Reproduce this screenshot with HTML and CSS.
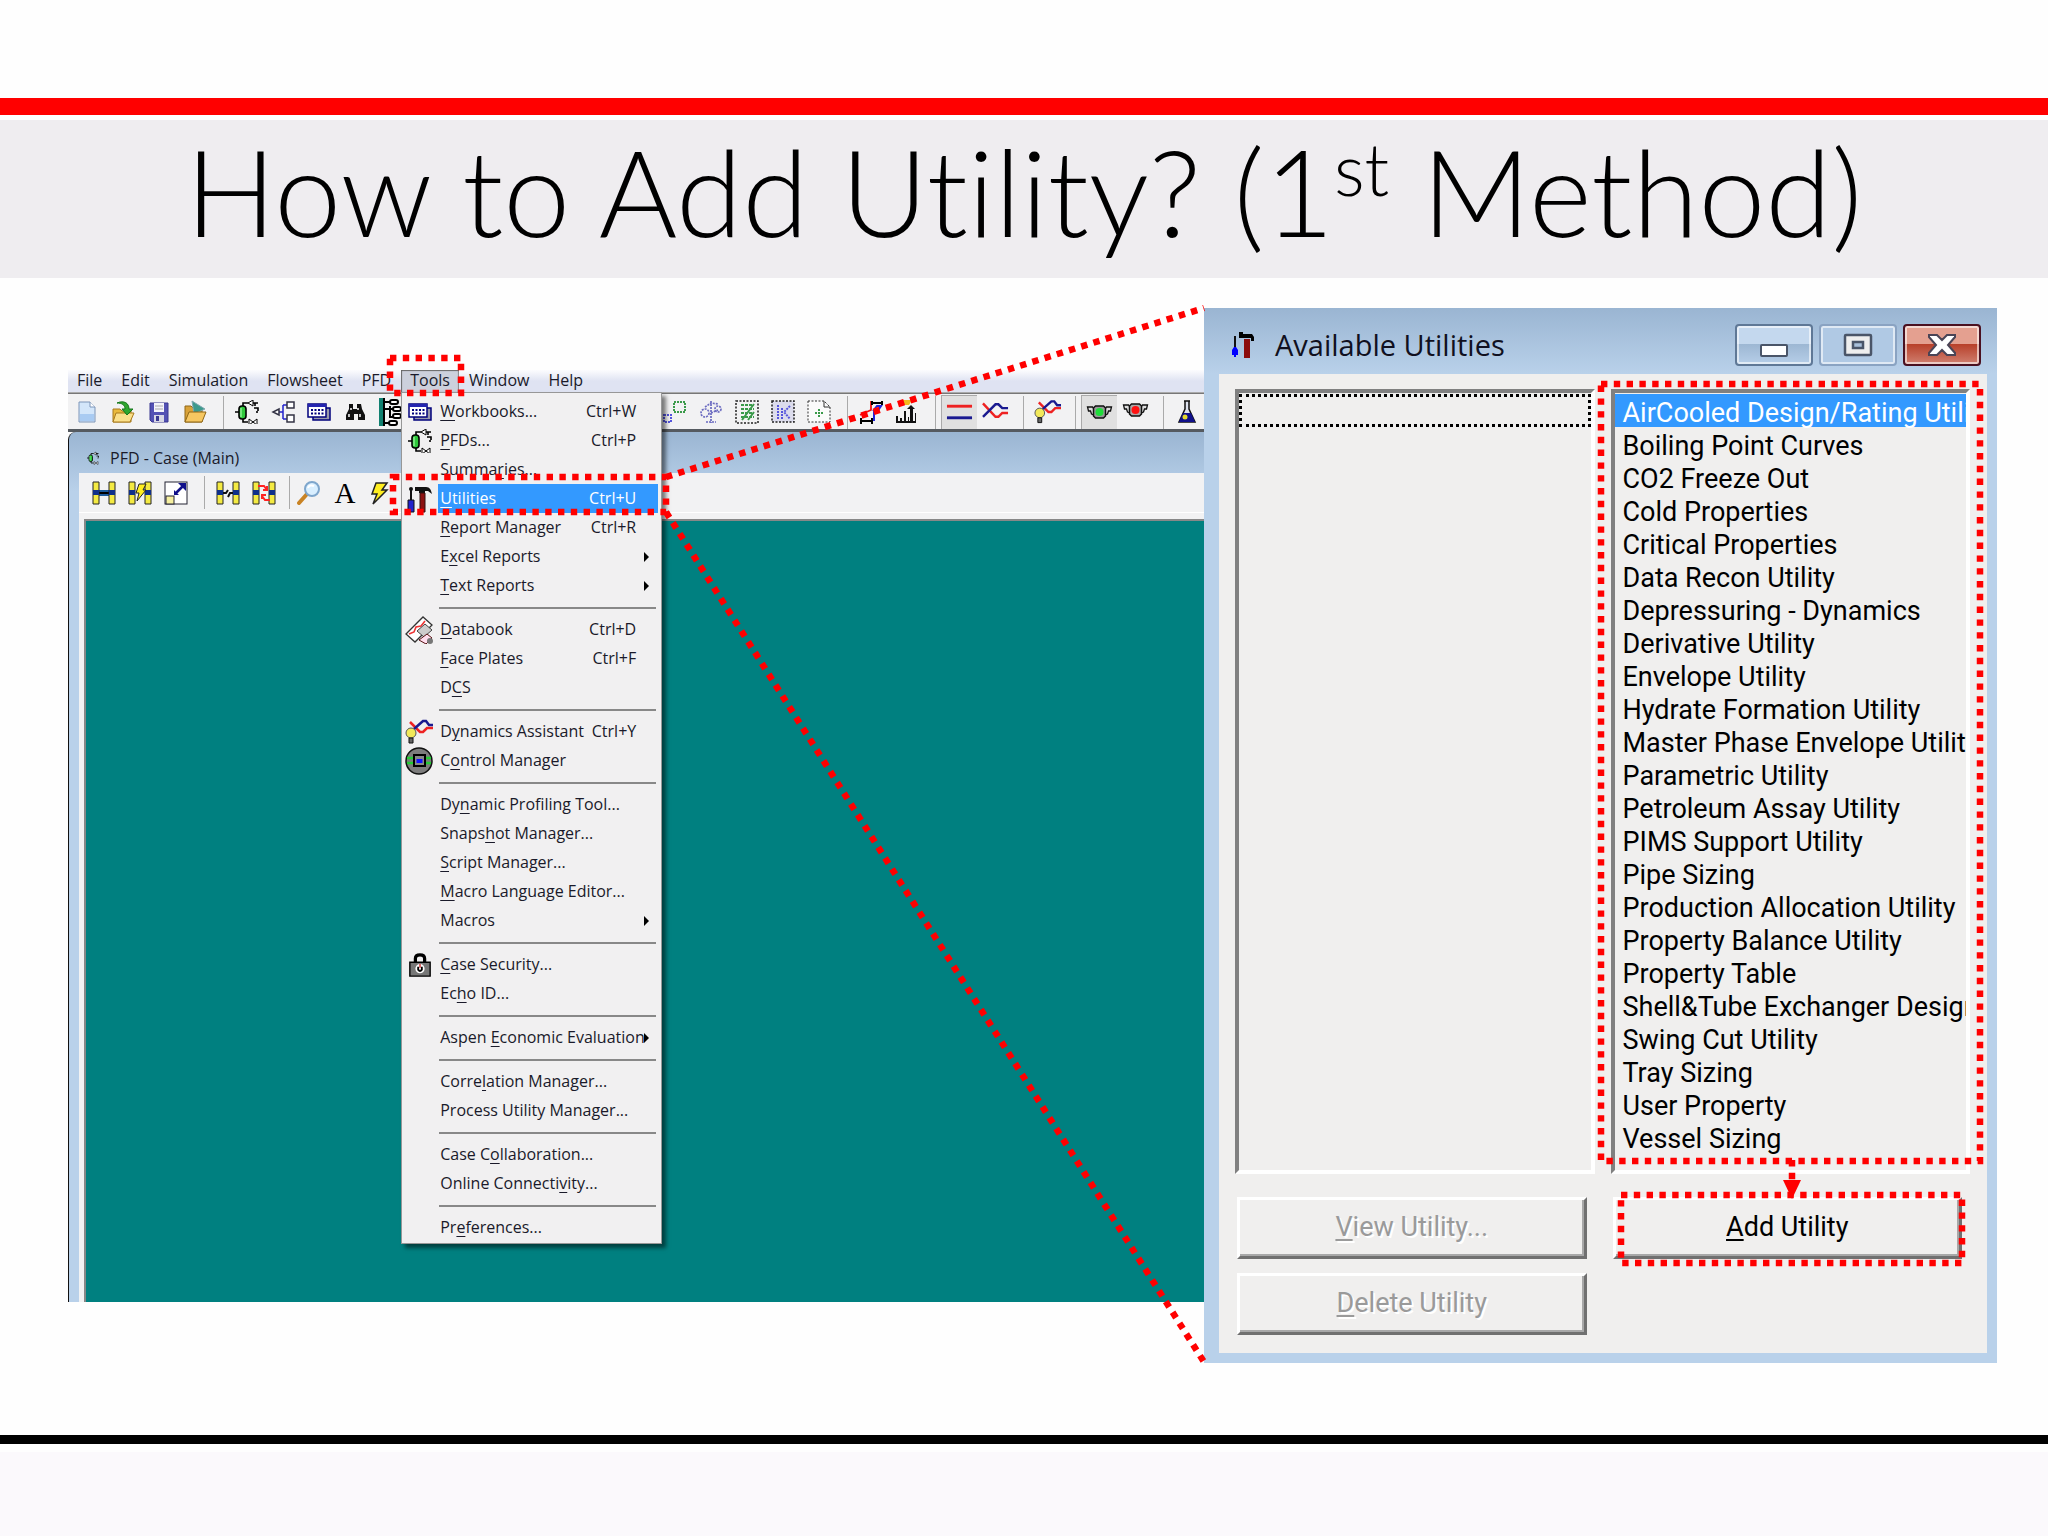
FILE: index.html
```html
<!DOCTYPE html>
<html lang="en">
<head>
  <meta charset="UTF-8">
  <meta name="viewport" content="width=device-width, initial-scale=1.0">
  <title>How to Add Utility? (1st Method)</title>
  <link rel="stylesheet" href="styles.css">
</head>
<body>
  <!-- shared icons -->
  <svg class="sprite" aria-hidden="true">
    <symbol id="i-new" viewBox="0 0 24 24"><path d="M4 2h11l5 5v15H4z" fill="#d3e6fa" stroke="#7d95b8"/><path d="M15 2v5h5" fill="#fff" stroke="#7d95b8"/><path d="M5 14h14v7H5z" fill="#a9cbf2"/></symbol>
    <symbol id="i-open" viewBox="0 0 24 24"><path d="M2 9h7l2 2h9v11H2z" fill="#e9b93c" stroke="#a87a1c"/><path d="M5 13h18l-4 9H2z" fill="#fbe08a" stroke="#a87a1c"/><path d="M6 3c7-3 12 0 12 6h4l-6 6-5-6h3c0-4-3-6-8-6z" fill="#2fa62f" stroke="#14761a"/></symbol>
    <symbol id="i-save" viewBox="0 0 24 24"><path d="M3 3h18v19H5l-2-2z" fill="#5351b4" stroke="#3a3891"/><path d="M7 3h10v9H7z" fill="#f4f4fb"/><path d="M8 6h8M8 9h8" stroke="#aaa"/><path d="M7 15h10v7H7z" fill="#d7d7e4"/><path d="M9 16h3v5H9z" fill="#3a3891"/></symbol>
    <symbol id="i-case" viewBox="0 0 24 24"><path d="M2 6h6l2 2h9v14H2z" fill="#d9a238" stroke="#8f6716"/><path d="M9 1l13 8-11 5z" fill="#3d9a8c" stroke="#7fa8b0"/><path d="M6 12h17l-4 10H2z" fill="#f6c761" stroke="#8f6716"/></symbol>
    <symbol id="i-pfd" viewBox="0 0 24 24"><rect x="4" y="6" width="7" height="13" rx="3" fill="#2fc83c" stroke="#000" stroke-width="1.6"/><path d="M6 8v9" stroke="#b8ffb8"/><path d="M0 12h4M8 6V3h5M8 19v3h5M18 3h5M20 3v3M19 8h4v3M22 11v2" stroke="#000" stroke-width="1.6" fill="none"/><path d="M18 0v6l-5-3zM14 19l4 3-4 3zM22 19l-4 3 4 3z" fill="#fff" stroke="#000"/></symbol>
    <symbol id="i-flow" viewBox="0 0 24 24"><path d="M8 12h4M12 5v14M12 5h4M12 19h4" stroke="#22c" stroke-width="1.5" fill="none"/><path d="M8 9v6l-6-3z" fill="#fff" stroke="#334" stroke-width="1.5"/><rect x="16" y="2" width="7" height="6" fill="#fff" stroke="#334" stroke-width="1.5"/><rect x="16" y="15" width="7" height="7" fill="#fff" stroke="#334" stroke-width="1.5"/></symbol>
    <symbol id="i-book" viewBox="0 0 24 24"><path d="M6 8h17v12H6z" fill="#99a" stroke="#00007c" stroke-width="1.5"/><path d="M1 4h18v13H1z" fill="#fff" stroke="#00007c" stroke-width="1.5"/><path d="M1 4h18v3H1z" fill="#2525b0"/><path d="M4 10h13M4 13.500h13" stroke="#00007c" stroke-width="2" stroke-dasharray="2 1.500"/></symbol>
    <symbol id="i-find" viewBox="0 0 24 24"><path d="M6 4h4v5h4V4h4l1 5 3 6v5h-7v-6h-4v6H3v-5l3-6z" fill="#111"/><path d="M6 14v3M17 14v3M8 8v2M15 8v2" stroke="#fff" stroke-width="1.5"/></symbol>
    <symbol id="i-tree" viewBox="0 0 24 28"><path d="M2 0v28" stroke="#108070" stroke-width="4"/><path d="M5 0v28M5 4h7M5 11h6M11 8v12M11 11h4M11 19h4M5 25h6" stroke="#000" stroke-width="2" fill="none"/><g fill="#fff" stroke="#000" stroke-width="2"><rect x="11" y="2" width="8" height="4" rx="2"/><rect x="14" y="9" width="8" height="4" rx="2"/><rect x="14" y="16" width="8" height="4" rx="2"/><rect x="10" y="23" width="8" height="4" rx="2"/></g></symbol>
    <symbol id="i-blocks" viewBox="0 0 24 24"><g fill="none" stroke-width="2" stroke-dasharray="2 1"><rect x="11" y="2" width="11" height="10" stroke="#3a9a4a"/><rect x="1" y="15" width="7" height="7" stroke="#55d"/></g></symbol>
    <symbol id="i-scale" viewBox="0 0 24 24"><g fill="none" stroke="#6a6ac0" stroke-width="1.700" stroke-dasharray="2 1"><path d="M12 1v22M7 22h10M6 7l6-4 7 1M12 13l7-3"/><circle cx="6" cy="13" r="4"/><circle cx="19" cy="9" r="3"/></g></symbol>
    <symbol id="i-grid" viewBox="0 0 24 24"><rect x="1" y="1" width="22" height="22" fill="none" stroke="#222" stroke-width="1.500" stroke-dasharray="2 1.500"/><path d="M6 5h13M6 9h13M6 13h13M6 17h13" stroke="#3a9a4a" stroke-width="2" stroke-dasharray="3 1"/><path d="M7 20L19 4M13 20l6-8" stroke="#3a9a4a" stroke-width="2"/></symbol>
    <symbol id="i-sheet" viewBox="0 0 24 24"><rect x="1" y="1" width="22" height="21" fill="#dcdcec" stroke="#222" stroke-width="1.500" stroke-dasharray="2 1.500"/><path d="M7 5v14M11 8v11M19 6l-6 6 6 7" stroke="#55d" stroke-width="2" stroke-dasharray="2 1" fill="none"/></symbol>
    <symbol id="i-note" viewBox="0 0 24 24"><path d="M1 1h16l6 6v15H1z" fill="#fbfbfb" stroke="#333" stroke-dasharray="2 1.500"/><path d="M17 1v6h6" stroke="#333" fill="none"/><path d="M8 13h8M12 9v8" stroke="#3a9a4a" stroke-width="2" stroke-dasharray="2 1"/></symbol>
    <symbol id="i-strip" viewBox="0 0 24 24"><path d="M1 15l11-5V1" stroke="#e11" stroke-width="1.800" fill="none"/><path d="M15 21v-9h3l4-6h-4l-4 5" stroke="#22d" stroke-width="2" fill="none"/><path d="M13 3h10M2 21h11M2 18v6M13 18v6M13 1v4M23 1v4" stroke="#000" stroke-width="2"/></symbol>
    <symbol id="i-bars" viewBox="0 0 24 24"><path d="M1 23v-7h2v5h2v-3h2v3h2V11h2v10h2v-4h1v4h1V7h3v14h2v-8h1v10z" fill="#111"/><path d="M12 9l4-4 4 4z" fill="#111"/><path d="M6 0h11l-3 5h-4z" fill="#f4b81c"/></symbol>
    <symbol id="i-lines" viewBox="0 0 28 24"><path d="M1 6h26" stroke="#e22" stroke-width="3"/><path d="M1 18h26" stroke="#1a1a90" stroke-width="3"/></symbol>
    <symbol id="i-cross" viewBox="0 0 28 24"><path d="M1 3l13 14h3l4-4h6" stroke="#e22" stroke-width="2.500" fill="none"/><path d="M1 17L14 4h3l4 4h6" stroke="#1a1a90" stroke-width="2.500" fill="none"/></symbol>
    <symbol id="i-dyn" viewBox="0 0 28 24"><path d="M5 2l10 10h3l4-4h6" stroke="#e22" stroke-width="2.500" fill="none"/><path d="M9 9l9-8h3l3 4h4" stroke="#1a1a90" stroke-width="2.500" fill="none"/><circle cx="6" cy="13" r="5" fill="#f2e95a" stroke="#555"/><path d="M4 18h4v5H4z" fill="#666" stroke="#111"/></symbol>
    <symbol id="i-go" viewBox="0 0 26 24"><path d="M1 7h5l2 3v5l-3-1-1-3H2zM25 7h-5l-2 3v5l3-1 1-3h2z" fill="#ddd" stroke="#111" stroke-width="1.300"/><path d="M9 6h8l2 2v8l-2 2H9l-2-2V8z" fill="#999" stroke="#111" stroke-width="1.500"/><circle cx="13" cy="12" r="4" fill="#1fdd3a"/></symbol>
    <symbol id="i-stop" viewBox="0 0 26 24"><path d="M1 5h5l2 3v5l-3-1-1-3H2zM25 5h-5l-2 3v5l3-1 1-3h2z" fill="#ddd" stroke="#111" stroke-width="1.300"/><path d="M9 4h8l2 2v8l-2 2H9l-2-2V6z" fill="#aaa" stroke="#111" stroke-width="1.500"/><circle cx="13" cy="10" r="4" fill="#f11"/></symbol>
    <symbol id="i-flask" viewBox="0 0 24 24"><path d="M9 1h6M10 1v8L4 22h16L14 9V1" fill="#dfe3ef" stroke="#111" stroke-width="1.500"/><path d="M8 13h8l4 9H4z" fill="#10108a"/><circle cx="10" cy="17" r="2.500" fill="#e6d92c"/></symbol>
    <symbol id="i-attach" viewBox="0 0 24 24"><path d="M2 9h20v6H2z" fill="#1c5a9c"/><path d="M6 12h12" stroke="#000" stroke-width="2"/><path d="M1 1h6v22H1zM17 1h6v22h-6z" fill="#f4ea42" stroke="#222"/><path d="M1 9h6v5H1zM17 9h6v5h-6z" fill="#10308a"/></symbol>
    <symbol id="i-auto" viewBox="0 0 24 24"><path d="M1 1h6v22H1zM17 1h6v22h-6z" fill="#f4ea42" stroke="#222"/><path d="M1 9h6v5H1zM17 9h6v5h-6z" fill="#10308a"/><path d="M11 3h7l-3 6h3l-9 11 2-8H8z" fill="#ffee20" stroke="#222"/></symbol>
    <symbol id="i-size" viewBox="0 0 24 24"><rect x="1" y="1" width="22" height="22" fill="#fff" stroke="#223"/><rect x="2" y="15" width="8" height="8" fill="#f5efa0" stroke="#223"/><path d="M11 13l8-8" stroke="#10108a" stroke-width="2.500"/><path d="M14 2h8v8zM10 9v5h5z" fill="#10108a"/></symbol>
    <symbol id="i-break" viewBox="0 0 24 24"><path d="M1 1h6v22H1zM17 1h6v22h-6z" fill="#f4ea42" stroke="#222"/><path d="M1 9h6v5H1zM17 9h6v5h-6z" fill="#10308a"/><path d="M7 12h3l2-3M17 12h-3l-2 4" stroke="#111" stroke-width="2" fill="none"/></symbol>
    <symbol id="i-swap" viewBox="0 0 24 24"><path d="M1 1h6v22H1zM17 1h6v22h-6z" fill="#f4ea42" stroke="#222"/><path d="M1 9h6v5H1zM17 9h6v5h-6z" fill="#10308a"/><path d="M6 5h6l3 4M11 9h4V5M18 19h-5l-3-4M14 14h-4v4" stroke="#f22" stroke-width="2" fill="none"/></symbol>
    <symbol id="i-zoom" viewBox="0 0 24 24"><path d="M2 22l8-9" stroke="#c98324" stroke-width="4" stroke-linecap="round"/><circle cx="15" cy="8" r="7" fill="#d9efff" stroke="#7ea6cc" stroke-width="2"/><path d="M11 7c1-3 4-3 6-2" stroke="#fff" stroke-width="2" fill="none"/></symbol>
    <symbol id="i-bolt" viewBox="0 0 24 24"><path d="M7 2h11l-5 7h5L4 23l4-10H3z" fill="#ffee20" stroke="#222" stroke-width="1.500"/></symbol>
    <symbol id="i-tools" viewBox="0 0 26 28"><path d="M5 3v12" stroke="#111" stroke-width="2"/><circle cx="5" cy="4" r="2" fill="#111"/><path d="M2 15h6v12H2z" fill="#22c" stroke="#111"/><path d="M9 2h11c4 0 5 3 6 7l-4-3H19v2h-6V6H9z" fill="#111"/><path d="M14 8h5v19h-5z" fill="#8c1212" stroke="#311"/></symbol>
    <symbol id="i-util" viewBox="0 0 24 28"><path d="M4 5v12" stroke="#111" stroke-width="2"/><path d="M3 16h2l2 3v5H5v2H3v-2H1v-5z" fill="#00f"/><path d="M8 1h4v2h9l2 3v4h-3V7H8z" fill="#000"/><path d="M13 8h6v19h-6z" fill="#8c0c0c"/></symbol>
    <symbol id="i-databook" viewBox="0 0 28 28"><path d="M1 18L18 1l9 8-17 17z" fill="#fff" stroke="#333" stroke-width="1.300"/><path d="M4 18l5-2 2-5 5-1 4-5" stroke="#e33" stroke-width="1.600" fill="none"/><path d="M12 15l8-7 7 6-8 7z" fill="#ccc" stroke="#444"/><path d="M14 24l8-6 5 4-6 6z" fill="#fde" stroke="#511"/><circle cx="25" cy="25" r="3" fill="#777"/></symbol>
    <symbol id="i-control" viewBox="0 0 28 28"><circle cx="14" cy="14" r="13" fill="#7d7d7d" stroke="#111" stroke-width="1.500"/><path d="M2 11h24M2 16h24" stroke="#22cc33" stroke-width="2.500"/><rect x="9" y="8" width="11" height="11" fill="#888" stroke="#000" stroke-width="2"/><path d="M11.500 12h6v4h-6z" fill="#11f"/></symbol>
    <symbol id="i-lock" viewBox="0 0 26 26"><path d="M8 11V6q0-4 5-4t5 4v5" fill="none" stroke="#000" stroke-width="3.500"/><path d="M2 10h22v15H2z" fill="#777" stroke="#000" stroke-width="1.500"/><circle cx="13" cy="17" r="5" fill="#fff"/><path d="M11 15v3q2 3 4 0v-3" fill="none" stroke="#000" stroke-width="2"/><path d="M13 12v4" stroke="#c22" stroke-width="1.500"/></symbol>
  </svg>

  <div class="slide">
    <header class="slide-header">
      <h1>How to Add Utility? (1<sup>st</sup> Method)</h1>
    </header>

    <main class="stage">
      <section class="app" aria-label="Simulation window">
        <nav class="menubar">
          <button>File</button>
          <button>Edit</button>
          <button>Simulation</button>
          <button>Flowsheet</button>
          <button>PFD</button>
          <div class="menu-holder">
            <button class="open">Tools</button>
            <ul class="menu">
              <li><button><svg><use href="#i-book"/></svg><span class="label"><u>W</u>orkbooks...</span><kbd>Ctrl+W</kbd></button></li>
              <li><button><svg><use href="#i-pfd"/></svg><span class="label"><u>P</u>FDs...</span><kbd>Ctrl+P</kbd></button></li>
              <li><button><span class="label">Summa<u>r</u>ies...</span></button></li>
              <li><button class="active"><svg class="big"><use href="#i-tools"/></svg><span class="label"><u>U</u>tilities</span><kbd>Ctrl+U</kbd></button></li>
              <li><button><span class="label"><u>R</u>eport Manager</span><kbd>Ctrl+R</kbd></button></li>
              <li><button class="more"><span class="label">E<u>x</u>cel Reports</span></button></li>
              <li><button class="more"><span class="label"><u>T</u>ext Reports</span></button></li>
              <li class="line"></li>
              <li><button><svg class="big"><use href="#i-databook"/></svg><span class="label"><u>D</u>atabook</span><kbd>Ctrl+D</kbd></button></li>
              <li><button><span class="label"><u>F</u>ace Plates</span><kbd>Ctrl+F</kbd></button></li>
              <li><button><span class="label">D<u>C</u>S</span></button></li>
              <li class="line"></li>
              <li><button><svg class="big"><use href="#i-dyn"/></svg><span class="label">D<u>y</u>namics Assistant</span><kbd>Ctrl+Y</kbd></button></li>
              <li><button><svg class="big"><use href="#i-control"/></svg><span class="label">C<u>o</u>ntrol Manager</span></button></li>
              <li class="line"></li>
              <li><button><span class="label">Dy<u>n</u>amic Profiling Tool...</span></button></li>
              <li><button><span class="label">Snaps<u>h</u>ot Manager...</span></button></li>
              <li><button><span class="label"><u>S</u>cript Manager...</span></button></li>
              <li><button><span class="label"><u>M</u>acro Language Editor...</span></button></li>
              <li><button class="more"><span class="label">Macros</span></button></li>
              <li class="line"></li>
              <li><button><svg><use href="#i-lock"/></svg><span class="label"><u>C</u>ase Security...</span></button></li>
              <li><button><span class="label">Ec<u>h</u>o ID...</span></button></li>
              <li class="line"></li>
              <li><button class="more"><span class="label">Aspen <u>E</u>conomic Evaluation</span></button></li>
              <li class="line"></li>
              <li><button><span class="label">Corre<u>l</u>ation Manager...</span></button></li>
              <li><button><span class="label">Process Utility Manager...</span></button></li>
              <li class="line"></li>
              <li><button><span class="label">Case C<u>o</u>llaboration...</span></button></li>
              <li><button><span class="label">Online Connecti<u>v</u>ity...</span></button></li>
              <li class="line"></li>
              <li><button><span class="label">Pr<u>e</u>ferences...</span></button></li>
            </ul>
          </div>
          <button>Window</button>
          <button>Help</button>
        </nav>

        <div class="toolbar">
          <button aria-label="New"><svg><use href="#i-new"/></svg></button>
          <button aria-label="Open"><svg><use href="#i-open"/></svg></button>
          <button aria-label="Save"><svg><use href="#i-save"/></svg></button>
          <button aria-label="Open case"><svg><use href="#i-case"/></svg></button>
          <i class="sep"></i>
          <button aria-label="PFD"><svg><use href="#i-pfd"/></svg></button>
          <button aria-label="Flowsheet"><svg><use href="#i-flow"/></svg></button>
          <button aria-label="Workbook"><svg><use href="#i-book"/></svg></button>
          <button aria-label="Find"><svg><use href="#i-find"/></svg></button>
          <button aria-label="Navigator"><svg class="tall"><use href="#i-tree"/></svg></button>
          <i class="sep"></i>
          <button aria-label="Column"></button>
          <button aria-label="Components"></button>
          <button aria-label="Reactions"></button>
          <i class="sep"></i>
          <button aria-label="Basis"></button>
          <button aria-label="Oil"></button>
          <button aria-label="Palette"></button>
          <button aria-label="Blocks"><svg><use href="#i-blocks"/></svg></button>
          <button aria-label="Balance"><svg><use href="#i-scale"/></svg></button>
          <button aria-label="Grid"><svg><use href="#i-grid"/></svg></button>
          <button aria-label="Sheet"><svg><use href="#i-sheet"/></svg></button>
          <button aria-label="Note"><svg><use href="#i-note"/></svg></button>
          <i class="sep"></i>
          <button aria-label="Strip chart"><svg><use href="#i-strip"/></svg></button>
          <button aria-label="Histogram"><svg><use href="#i-bars"/></svg></button>
          <i class="sep"></i>
          <button class="pressed" aria-label="Steady state"><svg class="wide"><use href="#i-lines"/></svg></button>
          <button aria-label="Dynamics"><svg class="wide"><use href="#i-cross"/></svg></button>
          <i class="sep"></i>
          <button aria-label="Dynamics assistant"><svg class="wide"><use href="#i-dyn"/></svg></button>
          <i class="sep"></i>
          <button class="pressed" aria-label="Solver active"><svg class="wide"><use href="#i-go"/></svg></button>
          <button aria-label="Solver holding"><svg class="wide"><use href="#i-stop"/></svg></button>
          <i class="sep"></i>
          <button aria-label="Environment"><svg><use href="#i-flask"/></svg></button>
        </div>

        <div class="child">
          <div class="child-title"><svg><use href="#i-pfd"/></svg>PFD - Case (Main)</div>
          <div class="child-body">
            <div class="toolbar small">
              <button aria-label="Attach"><svg><use href="#i-attach"/></svg></button>
              <button aria-label="Auto attach"><svg><use href="#i-auto"/></svg></button>
              <button aria-label="Size"><svg><use href="#i-size"/></svg></button>
              <i class="sep"></i>
              <button aria-label="Break"><svg><use href="#i-break"/></svg></button>
              <button aria-label="Swap"><svg><use href="#i-swap"/></svg></button>
              <i class="sep narrow"></i>
              <button aria-label="Zoom"><svg><use href="#i-zoom"/></svg></button>
              <button class="letter">A</button>
              <button aria-label="Quick route"><svg><use href="#i-bolt"/></svg></button>
            </div>
            <div class="canvas"></div>
          </div>
        </div>
      </section>

      <section class="dialog" aria-label="Available Utilities">
        <div class="dialog-title">
          <svg class="dialog-icon"><use href="#i-util"/></svg>
          <h2>Available Utilities</h2>
          <div class="win-buttons">
            <button aria-label="Minimize"><svg viewBox="0 0 30 24"><rect x="2" y="12" width="26" height="11" rx="1" fill="#fff" stroke="#4a5568" stroke-width="2"/></svg></button>
            <button class="dim" aria-label="Maximize"><svg viewBox="0 0 30 24"><rect x="2" y="2" width="26" height="20" rx="1" fill="#eee" stroke="#4a5568" stroke-width="2.500"/><rect x="10" y="9" width="10" height="6" fill="#a9c0da" stroke="#4a5568" stroke-width="2.500"/></svg></button>
            <button class="close" aria-label="Close"><svg viewBox="0 0 30 24"><path d="M2 2h8l5 5 5-5h8v2l-7 8 7 8v2h-8l-5-5-5 5H2v-2l7-8-7-8z" fill="#fff" stroke="#4a4456" stroke-width="2"/></svg></button>
          </div>
        </div>
        <form class="dialog-body">
          <div class="column">
            <select class="list current" size="23" aria-label="Current utilities">
              <option></option>
            </select>
            <button type="button" disabled><u>V</u>iew Utility...</button>
            <button type="button" disabled><u>D</u>elete Utility</button>
          </div>
          <div class="column">
            <select class="list" size="23" aria-label="Available utilities">
              <option selected>AirCooled Design/Rating Utility</option>
              <option>Boiling Point Curves</option>
              <option>CO2 Freeze Out</option>
              <option>Cold Properties</option>
              <option>Critical Properties</option>
              <option>Data Recon Utility</option>
              <option>Depressuring - Dynamics</option>
              <option>Derivative Utility</option>
              <option>Envelope Utility</option>
              <option>Hydrate Formation Utility</option>
              <option>Master Phase Envelope Utility</option>
              <option>Parametric Utility</option>
              <option>Petroleum Assay Utility</option>
              <option>PIMS Support Utility</option>
              <option>Pipe Sizing</option>
              <option>Production Allocation Utility</option>
              <option>Property Balance Utility</option>
              <option>Property Table</option>
              <option>Shell&amp;Tube Exchanger Design</option>
              <option>Swing Cut Utility</option>
              <option>Tray Sizing</option>
              <option>User Property</option>
              <option>Vessel Sizing</option>
            </select>
            <button type="button"><u>A</u>dd Utility</button>
          </div>
        </form>
      </section>
    </main>

    <footer class="slide-footer"></footer>

    <!-- red call-outs drawn over the two windows -->
    <svg class="callouts" viewBox="0 0 2048 1536" preserveAspectRatio="none" aria-hidden="true">
      <g fill="none" stroke="#f00" stroke-width="6.500" stroke-dasharray="6.400 6.400">
        <rect x="390" y="358" width="71" height="35"/>
        <rect x="393" y="477" width="273" height="35"/>
        <rect x="1601" y="384" width="379" height="777"/>
        <rect x="1621" y="1195" width="341" height="68"/>
        <path d="M666 477L1204 308M666 512l538 850M1792 1160v22"/>
      </g>
      <path d="M1783 1180h18l-9 19z" fill="#f00"/>
    </svg>
  </div>
</body>
</html>
```
FILE: styles.css
```css
* {
  box-sizing: border-box;
}
body {
  margin: 0;
  background: #fefefe;
  font-family: "Open Sans", "Noto Sans", sans-serif;
  color: #1a1a2a;
}
button {
  font: inherit;
  color: inherit;
  background: none;
  border: 0;
  padding: 0;
}
.sprite {
  position: absolute;
  width: 0;
  height: 0;
}
.slide {
  position: relative;
  display: flex;
  flex-direction: column;
  min-height: 100vh;
  padding-top: 98px;
}

/* title band */
.slide-header {
  border-top: 17px solid #f00;
}
.slide-header h1 {
  margin: 5px 0 0;
  height: 158px;
  background: #efedf0;
  color: #000;
  font-family: Lato, sans-serif;
  font-size: 120px;
  font-weight: 300;
  font-variant-ligatures: none;
  line-height: 142px;
  text-align: center;
  white-space: nowrap;
}
.slide-header sup {
  font-size: 72px;
  line-height: 0;
}
.stage {
  display: grid;
  grid-template-columns: 1136fr 793fr;
  padding: 30px 51px 0 68px;
}
.slide-footer {
  margin-top: auto;
  height: 101px;
  border-top: 9px solid #000;
  background: linear-gradient(#fefefe 8px, #fbf9fc 8px);
}
.callouts {
  position: absolute;
  inset: 0;
  width: 100%;
  height: 100%;
  pointer-events: none;
  z-index: 5;
}

/* main window */
.app {
  display: flex;
  flex-direction: column;
  min-width: 0;
  margin: 62px 0 61px;
  font-size: 16px;
}
.menubar {
  display: flex;
  gap: 1px;
  height: 23px;
  background: linear-gradient(#fcfcfe, #dfe3f2 50%, #dfe3f2);
  border-bottom: 1px solid #aaa;
}
.menubar > button,
.menu-holder > button {
  display: block;
  height: 22px;
  padding: 0 9px 2px;
  line-height: 20px;
}
.menu-holder {
  position: relative;
}
.menu-holder > .open {
  background: #ccd0dc;
  box-shadow: inset 1px 1px 1px #666, inset -1px 0 1px #888;
}
.menu {
  position: absolute;
  top: 22px;
  left: 0;
  z-index: 2;
  width: 261px;
  margin: 0;
  padding: 4px 3px 1px 1px;
  list-style: none;
  background: #f1f0f1;
  border: 1px solid #979797;
  box-shadow: 4px 4px 4px rgba(0, 0, 0, 0.5);
}
.menu button {
  position: relative;
  display: flex;
  align-items: center;
  width: 100%;
  height: 29px;
  padding-left: 35px;
  text-align: left;
  white-space: nowrap;
}
.menu svg {
  position: absolute;
  left: 5px;
  width: 24px;
  height: 24px;
}
.menu svg.big {
  left: 2px;
  width: 28px;
  height: 28px;
}
.menu .label {
  flex: 1;
  line-height: 29px;
  padding-left: 2px;
}
.menu kbd {
  font: inherit;
  line-height: 29px;
  padding-right: 22px;
}
.menu .active {
  color: #fff;
  background: linear-gradient(#39f, #39f) 35px 0 no-repeat;
}
.menu .more::after {
  content: "";
  position: absolute;
  right: 9px;
  border: 5px solid transparent;
  border-left-color: #000;
  border-right: 0;
}
.menu .line {
  height: 15px;
  margin: 0 2px 0 36px;
  background: linear-gradient(#888, #888) 0 7px / 100% 2px no-repeat;
}
u {
  text-underline-offset: 3px;
}

.toolbar {
  display: flex;
  align-items: center;
  height: 39px;
  padding: 1px 0 0 1px;
  overflow: hidden;
  background: #f2f2f3;
  border-top: 1px solid #777;
  border-bottom: 3px solid #555a60;
}
.toolbar button {
  display: grid;
  place-items: center;
  flex: none;
  width: 36px;
  height: 34px;
}
.toolbar svg {
  width: 24px;
  height: 24px;
}
.toolbar svg.tall {
  height: 28px;
}
.toolbar svg.wide {
  width: 27px;
}
.toolbar .pressed {
  background: #e0e0e0;
  box-shadow: inset 1px 1px #aaa;
}
.toolbar .sep {
  flex: none;
  width: 16px;
  height: 33px;
  background: linear-gradient(#aaa, #aaa) 10px 0 / 1px 100% no-repeat;
}
.toolbar.small {
  height: 40px;
  padding: 0 0 0 7px;
  border-top: 0;
  border-bottom: 1px solid #fff;
}
.toolbar.small .sep.narrow {
  width: 9px;
  background-position: 7px 0;
}
.toolbar .letter {
  color: #000;
  font-family: "Liberation Serif", serif;
  font-size: 29px;
  line-height: 30px;
}

.child {
  flex: 1;
  display: flex;
  flex-direction: column;
  padding-left: 10px;
  border-left: 1px solid #111;
  border-top-left-radius: 8px;
  background: linear-gradient(#9ab5d2, #b9d1ea 60px);
}
.child-title {
  display: flex;
  align-items: center;
  gap: 11px;
  height: 41px;
  padding: 11px 0 0 8px;
}
.child-title svg {
  width: 12px;
  height: 14px;
}
.child-body {
  flex: 1;
  display: flex;
  flex-direction: column;
  background: #f2f2f3;
}
.canvas {
  flex: 1;
  margin: 6px 0 0 5px;
  background: #008080;
  border-top: 2px solid #888;
  border-left: 2px solid #888;
}

/* utilities dialog */
.dialog {
  min-width: 0;
  padding: 0 10px 10px 15px;
  background: linear-gradient(#9ab5d2, #b9d1ea 66px);
}
.dialog-title {
  display: flex;
  align-items: center;
  height: 66px;
  padding: 7px 6px 0 12px;
}
.dialog-icon {
  width: 24px;
  height: 28px;
}
.dialog h2 {
  flex: 1;
  margin: 0 0 0 20px;
  color: #101020;
  font-size: 29px;
  font-weight: 400;
}
.win-buttons {
  display: flex;
  gap: 6px;
}
.win-buttons button {
  display: grid;
  place-items: center;
  width: 78px;
  height: 42px;
  border: 2px solid #5f7896;
  border-radius: 4px;
  background: linear-gradient(#c4d8ee 48%, #9db7d3 48%, #b6cee8);
  box-shadow: inset 0 0 0 2px rgba(255, 255, 255, 0.6);
}
.win-buttons svg {
  width: 30px;
  height: 24px;
}
.win-buttons .dim {
  border-color: #8aa3c2;
  background: #b0c9e4;
}
.win-buttons .close {
  border-color: #4a1020;
  background: linear-gradient(#e4a090 48%, #b8402a 48%, #d08070);
}
.dialog-body {
  display: grid;
  grid-template-columns: 1fr 1fr;
  gap: 16px;
  padding: 15px 17px 18px 16px;
  background: #f0efee;
  color: #000;
  font-family: Roboto, "Liberation Sans", sans-serif;
  font-size: 27px;
}
.column {
  min-width: 0;
}
.list {
  display: block;
  width: 100%;
  height: 785px;
  padding: 1px 0 0;
  overflow: hidden;
  font: inherit;
  color: #000;
  background: #f0efee;
  border: 4px solid;
  border-color: #808080 #fff #fff #808080;
  border-radius: 0;
  outline: 0;
}
.list option {
  height: 33px;
  min-height: 33px;
  padding: 3px 0 0 8px;
  line-height: 30px;
}
.list option:checked {
  background: linear-gradient(#39f, #39f);
  -webkit-text-fill-color: #fff;
}
.list.current option {
  border: 3px dotted #000;
}
.dialog-body button {
  display: block;
  width: calc(100% - 10px);
  height: 62px;
  margin: 23px 0 0 2px;
  padding-bottom: 2px;
  background: #f0efee;
  border: 3px solid;
  border-color: #fff #707070 #707070 #fff;
  box-shadow: inset -2px -2px #a8a8a8;
}
.dialog-body button + button {
  margin-top: 14px;
}
.dialog-body button:disabled {
  color: #9a9a9a;
  text-shadow: 2px 2px #fff;
}
```
